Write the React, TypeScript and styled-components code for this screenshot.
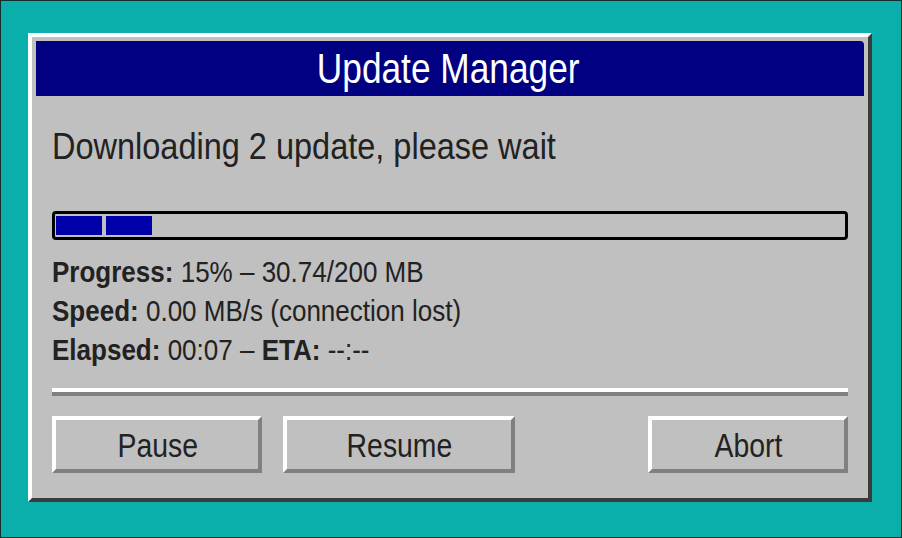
import styled, { createGlobalStyle } from 'styled-components'

const GlobalStyle = createGlobalStyle`
  html, body {
    margin: 0;
    padding: 0;
    background: #0aafab;
  }
  * {
    box-sizing: border-box;
  }
`

const Desktop = styled.div`
  width: 902px;
  height: 538px;
  border: 1px solid #132e2e;
  background: #0aafab;
  padding: 32px 0 0 27px;
`

const Window = styled.div`
  width: 844px;
  display: flex;
  flex-direction: column;
  background: #c0c0c0;
  border-style: solid;
  border-width: 4px;
  border-color: #ffffff #3b3b3b #3b3b3b #ffffff;
  padding: 4px 4px 0 4px;
`

// the old pixel font is tall and narrow, so squeeze a sans face sideways
const Narrow = styled.span<{ $scale: number; $origin?: string }>`
  display: inline-block;
  white-space: nowrap;
  transform: scaleX(${p => p.$scale});
  transform-origin: ${p => p.$origin ?? 'left'} center;
`

const TitleBar = styled.div`
  height: 55px;
  background: #000080;
  border-top-right-radius: 4px;
  color: #ffffff;
  font-family: "Liberation Sans", Arial, sans-serif;
  font-size: 43px;
  line-height: 55px;
  text-align: center;
  padding-right: 4px;
`

const Body = styled.div`
  display: flex;
  flex-direction: column;
  padding: 0 16px 25px 16px;
  color: #222222;
  font-family: "Liberation Sans", Arial, sans-serif;
`

const Heading = styled.div`
  margin-top: 32px;
  font-size: 37px;
  line-height: 38px;
  white-space: nowrap;
`

const ProgressTrack = styled.div`
  margin-top: 45px;
  height: 29px;
  border: 3px solid #000000;
  border-radius: 4px;
  padding: 2px 1px;
  display: flex;
  gap: 4px;
`

const Segment = styled.div`
  width: 46px;
  background: #0000a8;
`

const Info = styled.div`
  margin-top: 12px;
  display: flex;
  flex-direction: column;
`

const InfoLine = styled.div`
  font-size: 30px;
  line-height: 39px;
  white-space: nowrap;
`

const Label = styled.b`
  font-weight: bold;
`

const Separator = styled.div`
  margin-top: 19px;
  border-top: 4px solid #ffffff;
  border-bottom: 4px solid #808080;
`

const ButtonRow = styled.div`
  margin-top: 20px;
  display: flex;
  gap: 21px;
`

const Spacer = styled.div`
  flex: 1;
`

const Button = styled.button<{ $width: number }>`
  width: ${p => p.$width}px;
  height: 57px;
  padding: 0 0 0 1px;
  background: #c0c0c0;
  border-style: solid;
  border-width: 4px;
  border-color: #ffffff #808080 #808080 #ffffff;
  color: #222222;
  font-family: "Liberation Sans", Arial, sans-serif;
  font-size: 33px;
  line-height: 51px;
  cursor: pointer;
`

const App = () => (
  <>
    <GlobalStyle />
    <Desktop>
      <Window>
        <TitleBar>
          <Narrow $scale={0.82} $origin="center">Update Manager</Narrow>
        </TitleBar>
        <Body>
          <Heading>
            <Narrow $scale={0.878}>Downloading 2 update, please wait</Narrow>
          </Heading>
          <ProgressTrack>
            <Segment />
            <Segment />
          </ProgressTrack>
          <Info>
            <InfoLine>
              <Narrow $scale={0.867}><Label>Progress:</Label> 15% – 30.74/200 MB</Narrow>
            </InfoLine>
            <InfoLine>
              <Narrow $scale={0.867}><Label>Speed:</Label> 0.00 MB/s (connection lost)</Narrow>
            </InfoLine>
            <InfoLine>
              <Narrow $scale={0.867}><Label>Elapsed:</Label> 00:07 – <Label>ETA:</Label> --:--</Narrow>
            </InfoLine>
          </Info>
          <Separator />
          <ButtonRow>
            <Button $width={210}><Narrow $scale={0.86} $origin="center">Pause</Narrow></Button>
            <Button $width={232}><Narrow $scale={0.86} $origin="center">Resume</Narrow></Button>
            <Spacer />
            <Button $width={200}><Narrow $scale={0.86} $origin="center">Abort</Narrow></Button>
          </ButtonRow>
        </Body>
      </Window>
    </Desktop>
  </>
)

export default App
